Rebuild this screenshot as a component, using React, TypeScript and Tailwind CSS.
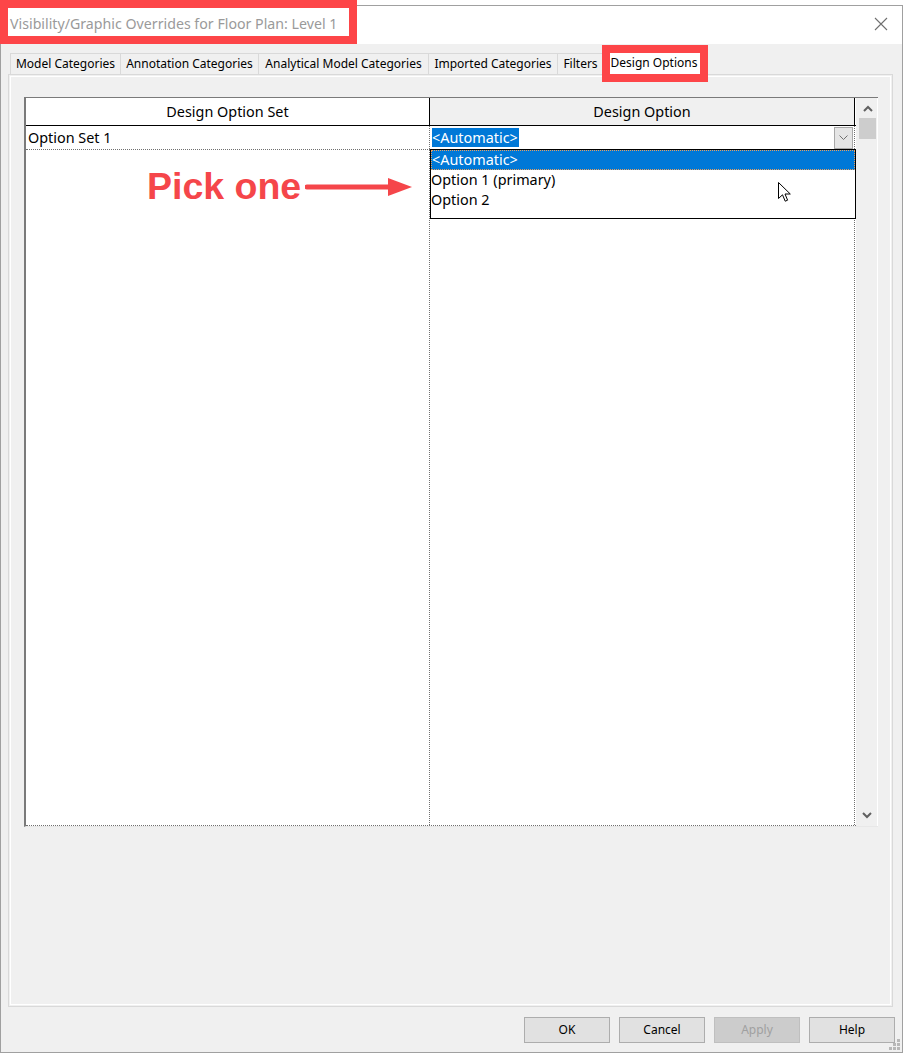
import React from "react";

const UI = { fontFamily: '"Noto Sans", "Open Sans", sans-serif' };

function Chevron({ up, className }: { up?: boolean; className?: string }) {
  return (
    <svg width="10" height="7" viewBox="0 0 10 7" className={className}>
      <path
        d={up ? "M1 6 L5 2 L9 6" : "M1 1 L5 5 L9 1"}
        fill="none"
        stroke="#606060"
        strokeWidth="2"
      />
    </svg>
  );
}

export default function App() {
  const tabs = [
    { label: "Model Categories", w: 111 },
    { label: "Annotation Categories", w: 139 },
    { label: "Analytical Model Categories", w: 171 },
    { label: "Imported Categories", w: 130 },
    { label: "Filters", w: 47 },
  ];
  return (
    <div className="relative w-[903px] h-[1053px] bg-white overflow-hidden" style={UI}>
      {/* window */}
      <div className="mt-[5px] h-[1048px] w-[903px] border border-[#a0a0a0] flex flex-col bg-[#f0f0f0]">
        {/* title bar */}
        <div className="h-[38px] bg-white flex items-center justify-between shrink-0">
          <div className="pl-[9px] text-[14.2px] text-[#9a9a9a] -mt-[3px]">
            Visibility/Graphic Overrides for Floor Plan: Level 1
          </div>
          <svg width="14" height="14" viewBox="0 0 14 14" className="mr-[14px] -mt-[2px]">
            <path d="M1 1 L13 13 M13 1 L1 13" stroke="#6f6f6f" strokeWidth="1.1" />
          </svg>
        </div>
        {/* tabs */}
        <div className="flex pl-[9px] pt-[9px] h-[30px] shrink-0 items-end">
          {tabs.map((t) => (
            <div
              key={t.label}
              style={{ width: t.w }}
              className="h-[21px] border border-b-0 border-[#d9d9d9] -ml-[1px] first:ml-0 flex items-center justify-center text-[12px] text-black bg-[#f0f0f0] whitespace-nowrap"
            >
              {t.label}
            </div>
          ))}
          <div className="w-[100px] h-[24px] bg-white flex items-center justify-center text-[12px] text-black -mb-[1px] whitespace-nowrap">
            Design Options
          </div>
        </div>
        {/* panel */}
        <div className="ml-[7px] w-[885px] h-[933px] border border-[#d9d9d9] shrink-0">
          <div className="m-[1px] h-[929px] border border-white pl-[13px] pt-[20px]">
            <div className="relative flex w-[854px] h-[730px] border-l-2 border-t border-[#7a7a7a] border-b border-b-[#e8e8e8] bg-white">
              {/* table */}
              <div className="flex flex-col w-[830px]">
                {/* header */}
                <div className="flex h-[28px] border-b border-black text-[14.4px]">
                  <div className="w-[404px] bg-white flex items-center justify-center border-r border-black">
                    Design Option Set
                  </div>
                  <div className="w-[425px] bg-[#f0f0f0] flex items-center justify-center border-r border-black">
                    Design Option
                  </div>
                </div>
                {/* row 1 */}
                <div className="flex h-[24px] border-b border-dotted border-[#707070] text-[14.4px]">
                  <div className="w-[404px] flex items-center pl-[2px] border-r border-dotted border-[#707070]">
                    Option Set 1
                  </div>
                  <div className="w-[425px] flex items-center justify-between pl-[2px] pr-[1px] border-r border-dotted border-[#707070]">
                    <span className="bg-[#0078d7] text-white h-[19px] leading-[19px] pr-[1px]">&lt;Automatic&gt;</span>
                    <div className="w-[19px] h-[22px] border border-[#a8a8a8] bg-[#e5e5e5] flex items-center justify-center">
                      <svg width="9" height="6" viewBox="0 0 9 6">
                        <path d="M0.5 0.5 L4.5 4.5 L8.5 0.5" fill="none" stroke="#707070" strokeWidth="1" />
                      </svg>
                    </div>
                  </div>
                </div>
                {/* body */}
                <div className="flex flex-1 border-b border-dotted border-[#707070]">
                  <div className="w-[404px] border-r border-dotted border-[#707070]" />
                  <div className="w-[425px] border-r border-dotted border-[#707070]" />
                </div>
              </div>
              {/* scrollbar */}
              <div className="w-[21px] bg-[#f0f0f0] flex flex-col items-center">
                <div className="h-[20px] flex items-center justify-center pl-[2px]">
                  <Chevron up />
                </div>
                <div className="w-[17px] h-[21px] bg-[#cdcdcd] ml-[2px]" />
                <div className="flex-1" />
                <div className="h-[20px] flex items-start justify-center pt-[6px]">
                  <Chevron />
                </div>
              </div>

              {/* dropdown list */}
              <div className="absolute left-[404px] top-[51px] w-[426px] h-[70px] border border-black bg-white text-[14.4px] flex flex-col">
                <div className="h-[20px] bg-[#0078d7] text-white leading-[18px] border border-dotted border-[#e8a060]">
                  &lt;Automatic&gt;
                </div>
                <div className="h-[20px] leading-[20px]">Option 1 (primary)</div>
                <div className="h-[20px] leading-[20px]">Option 2</div>
              </div>

              {/* mouse cursor */}
              <svg
                width="14"
                height="21"
                viewBox="0 0 14 21"
                className="absolute left-[752px] top-[84px]"
              >
                <path
                  d="M0.5 0.5 L0.5 16.5 L4.5 12.8 L7.2 19.2 L9.6 18.2 L7 12 L12.3 12 Z"
                  fill="white"
                  stroke="black"
                  strokeWidth="1"
                  strokeLinejoin="miter"
                />
              </svg>

              {/* annotation: Pick one */}
              <div
                className="absolute left-[121px] top-[66px] text-[37.5px] font-bold text-[#f5464a] leading-[44px]"
                style={{ fontFamily: '"Liberation Sans", Arial, sans-serif' }}
              >
                Pick one
              </div>
              <svg width="110" height="22" viewBox="0 0 110 22" className="absolute left-[279px] top-[78px]">
                <line x1="2" y1="11" x2="86" y2="11" stroke="#f5464a" strokeWidth="5" strokeLinecap="round" />
                <path d="M83 2 L107 11 L83 20 Z" fill="#f5464a" />
              </svg>
            </div>
          </div>
        </div>
        {/* buttons */}
        <div className="flex justify-end gap-[9px] pr-[7px] mt-[10px] text-[12px]">
          <div className="w-[86px] h-[26px] border border-[#adadad] bg-[#e1e1e1] flex items-center justify-center">OK</div>
          <div className="w-[86px] h-[26px] border border-[#adadad] bg-[#e1e1e1] flex items-center justify-center">Cancel</div>
          <div className="w-[86px] h-[26px] border border-[#bfbfbf] bg-[#cccccc] text-[#a0a0a0] flex items-center justify-center">Apply</div>
          <div className="w-[86px] h-[26px] border border-[#adadad] bg-[#e1e1e1] flex items-center justify-center">Help</div>
        </div>
      </div>

      {/* resize grip */}
      <svg width="12" height="12" viewBox="0 0 12 12" className="absolute left-[889px] top-[1039px]">
        <rect x="8" y="0" width="3" height="3" fill="#b8b8b8" />
        <rect x="4" y="4" width="3" height="3" fill="#b8b8b8" />
        <rect x="8" y="4" width="3" height="3" fill="#b8b8b8" />
        <rect x="0" y="8" width="3" height="3" fill="#b8b8b8" />
        <rect x="4" y="8" width="3" height="3" fill="#b8b8b8" />
        <rect x="8" y="8" width="3" height="3" fill="#b8b8b8" />
      </svg>

      {/* annotation: red box around title */}
      <div className="absolute left-0 top-0 w-[357px] h-[44px] border-[8px] border-[#fd4548]" />
      {/* annotation: red box around Design Options tab */}
      <div className="absolute left-[602px] top-[45px] w-[106px] h-[37px] border-[8px] border-[#fd4548]" />
    </div>
  );
}
